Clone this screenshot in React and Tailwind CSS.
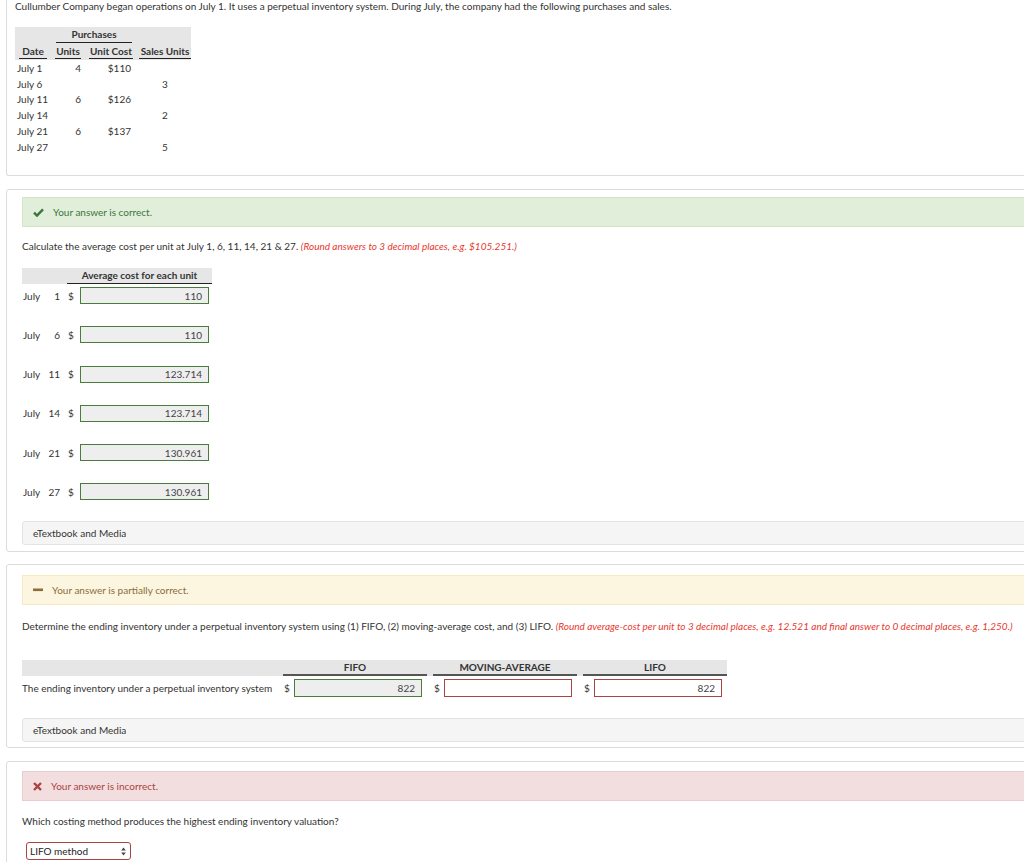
import React from 'react';

const Check = () => (
  <svg width="11" height="9" viewBox="0 0 11 9" className="shrink-0">
    <path d="M1 4.6 L4 7.6 L10 1.4" fill="none" stroke="#3c763d" strokeWidth="2.4" />
  </svg>
);

const Dash = () => (
  <svg width="10" height="4" viewBox="0 0 10 4" className="shrink-0">
    <rect x="0" y="0.5" width="10" height="2.6" fill="#8a6d3b" />
  </svg>
);

const Cross = () => (
  <svg width="9" height="9" viewBox="0 0 9 9" className="shrink-0">
    <path d="M1 1 L8 8 M8 1 L1 8" fill="none" stroke="#a94442" strokeWidth="2.4" />
  </svg>
);

function Banner({ kind, children }) {
  const styles = {
    ok: 'bg-[#e1eed9] border-[#d3e6c4] text-[#3c763d]',
    part: 'bg-[#fcf6e1] border-[#f6e8c0] text-[#8a6d3b]',
    bad: 'bg-[#f2dede] border-[#e9cdd0] text-[#a94442]',
  };
  return (
    <div className={`h-[30px] border flex items-center pl-[10px] gap-[9px] ${styles[kind]}`}>
      {kind === 'ok' && <Check />}
      {kind === 'part' && <Dash />}
      {kind === 'bad' && <Cross />}
      <span>{children}</span>
    </div>
  );
}

function Media() {
  return (
    <div className="h-[24px] bg-[#f5f5f5] border border-[#e3e3e3] rounded-l-[3px] flex items-center pl-[10px]">
      eTextbook and Media
    </div>
  );
}

function Card({ children, className = '' }) {
  return (
    <div className={`ml-[6px] w-[1040px] border border-[#dcdcdc] rounded-[3px] pl-[15px] pr-0 ${className}`}>
      {children}
    </div>
  );
}

const purchases = [
  ['July 1', '4', '$110', ''],
  ['July 6', '', '', '3'],
  ['July 11', '6', '$126', ''],
  ['July 14', '', '', '2'],
  ['July 21', '6', '$137', ''],
  ['July 27', '', '', '5'],
];

const avg = [
  ['1', '110'],
  ['6', '110'],
  ['11', '123.714'],
  ['14', '123.714'],
  ['21', '130.961'],
  ['27', '130.961'],
];

export default function App() {
  return (
    <div className="w-[1024px] h-[862px] overflow-hidden bg-white text-[#333] text-[10px] leading-[12px]" style={{ fontFamily: 'Lato, "Noto Sans", sans-serif' }}>
      {/* intro card */}
      <div className="ml-[6px] w-[1040px] h-[176px] border-l border-b border-[#dcdcdc] rounded-bl-[3px] pl-[8px]">
        <p className="pt-0">Cullumber Company began operations on July 1. It uses a perpetual inventory system. During July, the company had the following purchases and sales.</p>
        <div className="mt-[15px] w-[176px]">
          <div className="bg-[#e6e6e6] h-[33px] flex flex-col">
            <div className="flex h-[16px]">
              <div className="w-[36px]" />
              <div className="w-[86px] px-[5px] pt-[1px]">
                <div className="text-center font-bold border-b-[1.5px] border-[#222] h-[15px]">Purchases</div>
              </div>
            </div>
            <div className="flex h-[17px] font-bold pt-[2px]">
              <div className="w-[36px] px-[4px]"><div className="text-center border-b-[1.5px] border-[#222] h-[14px]">Date</div></div>
              <div className="w-[34px] px-[4px]"><div className="text-center border-b-[1.5px] border-[#222] h-[14px]">Units</div></div>
              <div className="w-[52px] px-[4px]"><div className="text-center border-b-[1.5px] border-[#222] h-[14px]">Unit Cost</div></div>
              <div className="w-[54px] pl-[2px]"><div className="text-center border-b-[1.5px] border-[#222] h-[14px]">Sales Units</div></div>
            </div>
          </div>
          {purchases.map(([d, u, c, s]) => (
            <div key={d} className="flex h-[15.8px] items-center">
              <div className="w-[36px] pl-[2px]">{d}</div>
              <div className="w-[34px] text-right pr-[4px]">{u}</div>
              <div className="w-[52px] text-right pr-[6px]">{c}</div>
              <div className="w-[54px] text-center pl-[2px]">{s}</div>
            </div>
          ))}
        </div>
      </div>

      {/* average cost card */}
      <Card className="mt-[13px] pt-[7px] pb-[6px]">
        <Banner kind="ok">Your answer is correct.</Banner>
        <p className="mt-[13px]">
          Calculate the average cost per unit at July 1, 6, 11, 14, 21 &amp; 27.{' '}
          <span className="italic text-[#e8382f]">(Round answers to 3 decimal places, e.g. $105.251.)</span>
        </p>
        <div className="mt-[16px] w-[190px]">
          <div className="bg-[#e6e6e6] h-[16px] flex">
            <div className="w-[45px]" />
            <div className="flex-1 text-center font-bold border-b-[1.5px] border-[#222] leading-[14px]">Average cost for each unit</div>
          </div>
          <div className="flex flex-col gap-[22.3px] mt-[3px]">
            {avg.map(([d, v]) => (
              <div key={d} className="flex items-center h-[17px]">
                <span className="w-[20px] pl-[1px]">July</span>
                <span className="w-[18px] text-right">{d}</span>
                <span className="w-[20px] pl-[8px]">$</span>
                <div className="w-[129px] h-[17px] bg-[#eeeeee] border-[1.5px] border-[#4a7c3d] flex items-center justify-end pr-[6px] text-[#444]">{v}</div>
              </div>
            ))}
          </div>
        </div>
        <div className="mt-[21px]">
          <Media />
        </div>
      </Card>

      {/* ending inventory card */}
      <Card className="mt-[12px] pt-[10px] pb-[5px]">
        <Banner kind="part">Your answer is partially correct.</Banner>
        <p className="mt-[15px]">
          Determine the ending inventory under a perpetual inventory system using (1) FIFO, (2) moving-average cost, and (3) LIFO.{' '}
          <span className="italic text-[#e8382f]">(Round average-cost per unit to 3 decimal places, e.g. 12.521 and final answer to 0 decimal places, e.g. 1,250.)</span>
        </p>
        <div className="mt-[28px] w-[705px]">
          <div className="bg-[#e6e6e6] h-[16px] flex">
            <div className="w-[261px]" />
            {['FIFO', 'MOVING-AVERAGE', 'LIFO'].map((h, i) => (
              <div key={h} className={`w-[144px] ${i < 2 ? 'mr-[6px]' : ''} text-center font-bold border-b-2 border-[#555] leading-[14px]`}>{h}</div>
            ))}
          </div>
          <div className="flex items-center h-[19px] mt-[2px]">
            <div className="w-[261px]">The ending inventory under a perpetual inventory system</div>
            {[
              ['822', 'bg-[#eeeeee] border-[#4a7c3d]'],
              ['', 'bg-white border-[#a94442]'],
              ['822', 'bg-white border-[#a94442]'],
            ].map(([v, cls], i) => (
              <div key={i} className={`w-[144px] ${i < 2 ? 'mr-[6px]' : ''} flex items-center`}>
                <span className="w-[11px] pl-[1px]">$</span>
                <div className={`w-[128px] h-[18px] border-[1.5px] ${cls} flex items-center justify-end pr-[6px] text-[#444]`}>{v}</div>
              </div>
            ))}
          </div>
        </div>
        <div className="mt-[21px]">
          <Media />
        </div>
      </Card>

      {/* highest valuation card */}
      <Card className="mt-[13px] pt-[9px] pb-[6px]">
        <Banner kind="bad">Your answer is incorrect.</Banner>
        <p className="mt-[14px]">Which costing method produces the highest ending inventory valuation?</p>
        <div className="mt-[15px] ml-[4px] w-[105px] h-[18px] border-[1.5px] border-[#a94442] rounded-[3px] flex items-center justify-between pl-[3px] pr-[4px] text-[#222]">
          <span>LIFO method</span>
          <svg width="5" height="9" viewBox="0 0 5 9">
            <path d="M2.5 0.5 L4.8 3.6 L0.2 3.6 Z M2.5 8.5 L4.8 5.4 L0.2 5.4 Z" fill="#444" />
          </svg>
        </div>
      </Card>
    </div>
  );
}
